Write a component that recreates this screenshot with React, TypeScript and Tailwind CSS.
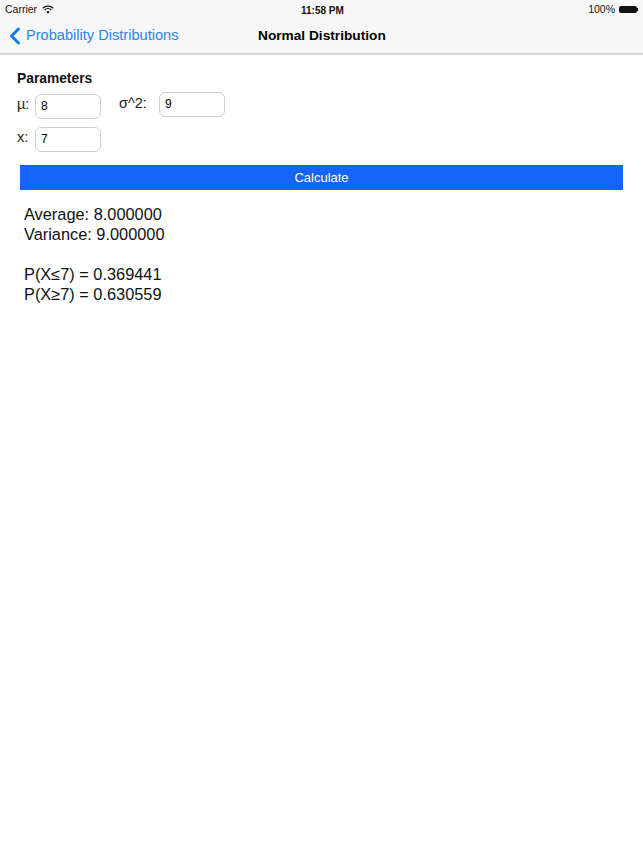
import { ChevronLeft } from "lucide-react";

function WifiIcon() {
  return (
    <svg width="12" height="9" viewBox="0 0 12 9" fill="none" stroke="#111" strokeWidth="1.2">
      <path d="M0.8 3.2C3.7 0.4 8.3 0.4 11.2 3.2" />
      <path d="M2.6 5C4.5 3.2 7.5 3.2 9.4 5" />
      <path d="M6 8.6L4.3 6.7C5.3 5.9 6.7 5.9 7.7 6.7Z" fill="#111" stroke="none" />
    </svg>
  );
}

function Field({ value }: { value: string }) {
  return (
    <input
      readOnly
      defaultValue={value}
      className="w-[66px] h-[25px] rounded-[6px] border border-[#d0d0d0] bg-white px-[5px] pb-[2px] text-[12px] text-black"
    />
  );
}

export default function App() {
  return (
    <div className="min-h-[857px] bg-white text-black font-['Liberation_Sans',Arial,sans-serif]">
      {/* Status + nav bar */}
      <div className="h-[55px] bg-[#f7f7f7] border-b-2 border-[#d8d8d8]">
        <div className="relative flex items-center justify-between h-[19px] pl-[5px] pr-[5px] text-[10.5px] text-[#111]">
          <div className="flex items-center gap-[5px]">
            <span>Carrier</span>
            <WifiIcon />
          </div>
          <span className="absolute left-[301px] top-[3px] text-[10px] font-bold">11:58 PM</span>
          <div className="flex items-center gap-[4px]">
            <span>100%</span>
            <div className="flex items-center">
              <div className="w-[18px] h-[7px] rounded-[2px] bg-[#111]" />
              <div className="w-[1px] h-[3px] bg-[#111]" />
            </div>
          </div>
        </div>
        <div className="relative flex items-center h-[34px]">
          <ChevronLeft size={28} strokeWidth={2.6} className="ml-[1px] text-[#0e7af5]" />
          <span className="-ml-[3px] text-[14.6px] text-[#2a85f0]">Probability Distributions</span>
          <span className="absolute left-[258px] top-[7px] text-[13.7px] font-bold text-black">Normal Distribution</span>
        </div>
      </div>

      {/* Parameters */}
      <div className="pl-[17px] pt-[16px]">
        <div className="text-[13.8px] font-bold text-[#111] leading-[16px]">Parameters</div>
        <div className="flex items-start mt-[7px]">
          <div className="flex items-center w-[102px]">
            <span className="w-[18px] pb-[3px] text-[14.5px] text-[#222]">µ:</span>
            <Field value="8" />
          </div>
          <div className="flex items-center -mt-[2px]">
            <span className="w-[40px] pb-[2px] text-[14.5px] text-[#222]">σ^2:</span>
            <Field value="9" />
          </div>
        </div>
        <div className="flex items-center mt-[8px]">
          <span className="w-[18px] pb-[3px] text-[14.5px] text-[#222]">x:</span>
          <Field value="7" />
        </div>
      </div>

      <div className="px-[20px] mt-[13px]">
        <button className="w-full h-[25px] bg-[#1565fb] text-white text-[13px]">Calculate</button>
      </div>

      {/* Results */}
      <div className="pl-[24px] pt-[15px] text-[16.35px] leading-[19.5px] text-[#111]">
        <div>Average: 8.000000</div>
        <div>Variance: 9.000000</div>
        <div className="mt-[21px]">P(X≤7) = 0.369441</div>
        <div>P(X≥7) = 0.630559</div>
      </div>
    </div>
  );
}
